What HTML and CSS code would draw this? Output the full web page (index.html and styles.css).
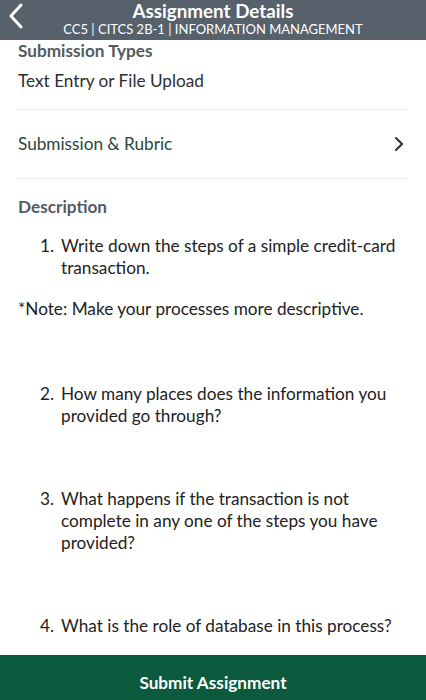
FILE: index.html
```html
<!DOCTYPE html>
<html>
<head>
<meta charset="utf-8">
<link rel="stylesheet" href="styles.css">
</head>
<body>
<div class="app">
  <header class="topbar">
    <svg class="back" width="16" height="26" viewBox="0 0 16 26"><path d="M13 2 L3 13 L13 24" fill="none" stroke="#fff" stroke-width="3" stroke-linecap="round" stroke-linejoin="round"/></svg>
    <div class="title">Assignment Details</div>
    <div class="subtitle">CC5 | CITCS 2B-1 | INFORMATION MANAGEMENT</div>
  </header>
  <main class="content">
    <div class="label">Submission Types</div>
    <div class="value">Text Entry or File Upload</div>
    <div class="divider"></div>
    <div class="row">
      <span class="row-text">Submission &amp; Rubric</span>
      <svg class="chev" width="10" height="16" viewBox="0 0 10 16"><path d="M2 2 L8 8 L2 14" fill="none" stroke="#2b2f33" stroke-width="2" stroke-linecap="round" stroke-linejoin="round"/></svg>
    </div>
    <div class="divider"></div>
    <div class="label desc">Description</div>
    <ol class="q q1"><li><span class="num">1.</span><span>Write down the steps of a simple credit-card transaction.</span></li></ol>
    <p class="note">*Note: Make your processes more descriptive.</p>
    <ol class="q q2"><li><span class="num">2.</span><span>How many places does the information you provided go through?</span></li></ol>
    <ol class="q q3"><li><span class="num">3.</span><span>What happens if the transaction is not complete in any one of the steps you have provided?</span></li></ol>
    <ol class="q q4"><li><span class="num">4.</span><span>What is the role of database in this process?</span></li></ol>
  </main>
  <footer class="submit">Submit Assignment</footer>
</div>
</body>
</html>
```
FILE: styles.css
```css
* { box-sizing: border-box; }
html, body { margin: 0; padding: 0; }
body {
  font-family: Lato, "Open Sans", sans-serif;
  background: #fff;
  color: #2a2a2a;
}
.app {
  height: 700px;
  display: flex;
  flex-direction: column;
  overflow: hidden;
}
.topbar {
  position: relative;
  height: 40px;
  flex: none;
  background: #56616c;
  color: #fff;
  display: flex;
  flex-direction: column;
  align-items: center;
  justify-content: flex-start;
}
.back {
  position: absolute;
  left: 8px;
  top: 3px;
}
.title {
  font-weight: 700;
  font-size: 18.8px;
  line-height: 22px;
}
.subtitle {
  font-size: 13px;
  line-height: 15px;
}
.content {
  flex: 1;
  padding: 0 18px;
  overflow: hidden;
}
.label {
  font-weight: 700;
  font-size: 17.2px;
  line-height: 22px;
  color: #555a5f;
}
.value {
  font-size: 17.2px;
  line-height: 22px;
  margin-top: 8px;
  color: #2d2d2d;
}
.divider {
  height: 1px;
  background: #ececec;
  margin-top: 17px;
}
.row {
  height: 68px;
  display: flex;
  align-items: center;
  justify-content: space-between;
  padding-right: 4px;
}
.row + .divider { margin-top: 0; }
.row-text {
  font-size: 17.2px;
  line-height: 22px;
  color: #2b463b;
}
.label.desc { margin-top: 17px; }
.q {
  list-style: none;
  margin: 17px 0 0;
  padding-left: 22px;
  font-size: 17.2px;
  line-height: 22px;
  color: #222;
}
.q li { display: flex; }
.num { flex: none; width: 21px; }
.note {
  margin: 19px 0 0;
  font-size: 17.2px;
  line-height: 22px;
  color: #222;
}
.q2 { margin-top: 63px; }
.q3 { margin-top: 61px; }
.q4 { margin-top: 61px; }
.submit {
  flex: none;
  height: 45px;
  background: #0c5a3e;
  color: #fff;
  font-weight: 700;
  font-size: 17.2px;
  display: flex;
  align-items: center;
  justify-content: center;
  padding-top: 10px;
}
```
